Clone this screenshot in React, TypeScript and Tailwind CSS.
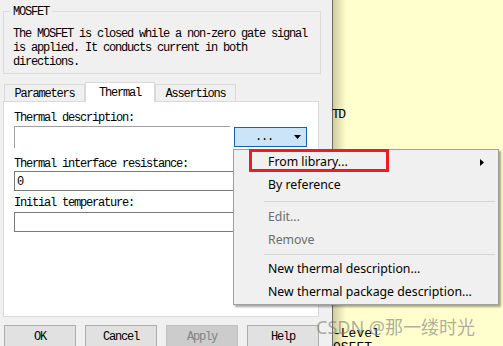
import React from "react";

const mono = "font-['Liberation_Mono',monospace] text-[12px] tracking-[-1.2px]";

function MenuItem({ label, disabled, arrow }: { label: string; disabled?: boolean; arrow?: boolean }) {
  return (
    <div
      className={`relative flex h-[23px] items-center pl-[34px] ${disabled ? "text-[#6d6d6d]" : "text-black"}`}
    >
      {label}
      {arrow && (
        <svg className="absolute right-[14px] top-[8px]" width="4" height="7" viewBox="0 0 4 7">
          <path d="M0 0 L4 3.5 L0 7Z" fill="#000" />
        </svg>
      )}
    </div>
  );
}

function Sep({ top, bottom }: { top: string; bottom: string }) {
  return (
    <div className={`${top} ${bottom} pl-[30px] pr-[3px]`}>
      <div className="h-px bg-[#d5d5d5]" />
    </div>
  );
}

function Btn({ label, disabled }: { label: string; disabled?: boolean }) {
  return (
    <div
      className={`flex h-[23px] w-[72px] items-center justify-center border ${
        disabled ? "border-[#bfbfbf] bg-[#cccccc] text-[#838383]" : "border-[#adadad] bg-[#e1e1e1] text-black"
      }`}
    >
      {label}
    </div>
  );
}

export default function App() {
  return (
    <div className="relative flex h-[346px] w-[503px] overflow-hidden bg-[#ffffcc]">
      {/* Dialog */}
      <div className={`flex w-[333px] shrink-0 flex-col border-r border-[#6b6b6b] bg-[#f0f0f0] text-black ${mono}`}>
        {/* group box */}
        <div className="ml-[3px] mt-[11px] h-[63px] w-[318px] shrink-0 border border-[#dcdcdc] px-[9px]">
          <div className="-ml-[3px] -mt-[6px] w-fit bg-[#f0f0f0] px-[3px] leading-[12px]">MOSFET</div>
          <p className="mt-[9px] leading-[14px]">
            The MOSFET is closed while a non-zero gate signal
            <br />
            is applied. It conducts current in both
            <br />
            directions.
          </p>
        </div>

        {/* tabs */}
        <div className="relative z-10 mt-[8px] flex h-[19px] shrink-0 items-end pl-[4px]">
          <div className="flex h-[17px] w-[81px] items-center justify-center border border-b-0 border-[#d9d9d9] bg-[#f0f0f0] pt-[2px] leading-[12px]">
            Parameters
          </div>
          <div className="-mb-px flex h-[20px] w-[70px] items-start justify-center border border-b-0 border-[#d9d9d9] bg-white pt-[4px] leading-[12px]">
            Thermal
          </div>
          <div className="flex h-[17px] w-[81px] items-center justify-center border border-b-0 border-[#d9d9d9] bg-[#f0f0f0] pt-[2px] leading-[12px]">
            Assertions
          </div>
        </div>

        {/* panel */}
        <div className="ml-[3px] flex h-[216px] w-[316px] shrink-0 flex-col border border-[#d9d9d9] bg-white pl-[10px] leading-[12px]">
          <div className="mt-[10px]">Thermal description:</div>
          <div className="mt-[2px] flex items-start">
            <div className="h-[22px] w-[216px] border-l border-t border-[#a0a0a0]" />
            <div className="ml-[4px] mt-px flex h-[20px] w-[73px] items-center border border-[#1464ad] bg-[#cce4f7] pl-[20px]">
              <span>...</span>
              <svg className="ml-auto mr-[5px]" width="7" height="4" viewBox="0 0 7 4">
                <path d="M0 0 H7 L3.5 4Z" fill="#000" />
              </svg>
            </div>
          </div>
          <div className="mt-[10px]">Thermal interface resistance:</div>
          <div className="mt-px flex h-[20px] w-[292px] items-center border border-[#7a7a7a] pl-[2px] pt-[2px]">0</div>
          <div className="mt-[6px]">Initial temperature:</div>
          <div className="mt-[3px] h-[20px] w-[292px] border border-[#7a7a7a]" />
        </div>

        {/* buttons */}
        <div className="ml-[4px] mt-[8px] flex shrink-0 gap-[9px]">
          <Btn label="OK" />
          <Btn label="Cancel" />
          <Btn label="Apply" disabled />
          <Btn label="Help" />
        </div>
      </div>

      {/* yellow canvas */}
      <div className="relative flex-1 bg-[linear-gradient(to_right,#cfcca0_0px,#fffecc_13px)] font-['Liberation_Mono',monospace] text-[13px] leading-[13px] text-black">
        <span className="absolute left-[-1px] top-[108px] tracking-[-1.5px]">TD</span>
        <span className="absolute left-[0px] top-[327px]">-Level</span>
        <span className="absolute left-[0px] top-[341px]">OSFET</span>
      </div>

      {/* context menu */}
      <div className="absolute left-[233px] top-[149px] w-[266px] border border-[#a0a0a0] bg-[#f0f0f0] pt-px font-['Noto_Sans',sans-serif] text-[12.3px] shadow-[2px_2px_2px_rgba(0,0,0,0.35)]">
        <MenuItem label="From library..." arrow />
        <MenuItem label="By reference" />
        <Sep top="pt-[4px]" bottom="pb-[4px]" />
        <MenuItem label="Edit..." disabled />
        <MenuItem label="Remove" disabled />
        <Sep top="pt-[2px]" bottom="pb-[3px]" />
        <MenuItem label="New thermal description..." />
        <MenuItem label="New thermal package description..." />
        <div className="absolute left-[15px] top-[-1px] h-[23px] w-[140px] border-[3px] border-[#ec1c24]" />
      </div>

      {/* watermark */}
      <div className="pointer-events-none absolute left-[316px] top-[316px] font-['Noto_Sans','Noto_Sans_CJK_SC',sans-serif] text-[18px] leading-[22px] text-[rgba(120,120,120,0.6)]">
        CSDN @那一缕时光
      </div>
    </div>
  );
}
